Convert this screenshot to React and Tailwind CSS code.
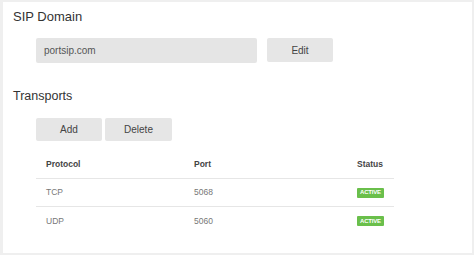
import React from 'react'

const transports = [
  { protocol: 'TCP', port: '5068', status: 'ACTIVE' },
  { protocol: 'UDP', port: '5060', status: 'ACTIVE' },
]

function GrayButton({ label, className }) {
  return (
    <button className={'flex items-center justify-center rounded-[2px] bg-[#e6e6e6] text-[10px] text-[#444] ' + className}>
      {label}
    </button>
  )
}

export default function App() {
  return (
    <div className="h-[255px] w-[474px] overflow-hidden bg-[#efefef] pt-[2px] pl-[3px] pr-[2px] font-['Liberation_Sans',Arial,sans-serif]">
      <div className="h-[251px] bg-white pl-[10px]">
        <h2 className="pt-[7px] text-[13px] leading-[16px] text-[#333]">SIP Domain</h2>

        <div className="mt-[13px] ml-[23px] flex items-start">
          <div className="flex h-[25px] w-[221px] items-center rounded-[2px] bg-[#e5e5e5] pl-[8px] text-[10px] text-[#555]">
            portsip.com
          </div>
          <GrayButton label="Edit" className="ml-[10px] h-[24px] w-[66px]" />
        </div>

        <h2 className="mt-[25px] text-[12.5px] leading-[16px] text-[#333]">Transports</h2>

        <div className="mt-[14px] ml-[23px] flex gap-[3px]">
          <GrayButton label="Add" className="h-[23px] w-[66px]" />
          <GrayButton label="Delete" className="h-[23px] w-[67px]" />
        </div>

        <div className="mt-[10px] ml-[23px] w-[358px]">
          <div className="grid h-[28px] grid-cols-[148px_163px_47px] items-center border-b border-[#e6e6e6] text-[8.5px] font-bold text-[#444]">
            <span className="pl-[10px]">Protocol</span>
            <span className="pl-[10px]">Port</span>
            <span className="pl-[10px]">Status</span>
          </div>
          {transports.map((t, i) => (
            <div
              key={t.protocol}
              className={
                'grid h-[28px] grid-cols-[148px_163px_47px] items-center text-[8.5px] text-[#777] ' +
                (i === 0 ? 'border-b border-[#e6e6e6]' : '')
              }
            >
              <span className="pl-[10px]">{t.protocol}</span>
              <span className="pl-[10px]">{t.port}</span>
              <span className="flex pl-[10px]">
                <span className="flex h-[10px] w-[27px] items-center justify-center rounded-[1px] bg-[#6abf4b] text-[6px] font-bold tracking-[-0.2px] text-white">
                  {t.status}
                </span>
              </span>
            </div>
          ))}
        </div>
      </div>
    </div>
  )
}
